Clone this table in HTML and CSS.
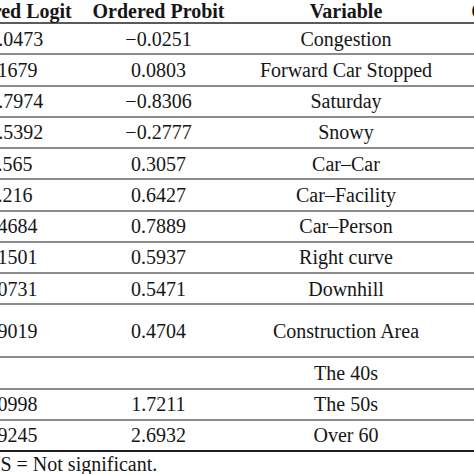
FILE: index.html
```html
<!DOCTYPE html>
<html>
<head>
<meta charset="utf-8">
<link rel="stylesheet" href="styles.css">
</head>
<body>
<div class="frame">
  <table class="results">
    <colgroup>
      <col class="c1"><col class="c2"><col class="c3"><col class="c4">
    </colgroup>
    <thead>
      <tr>
        <th>Ordered Logit</th>
        <th>Ordered Probit</th>
        <th>Variable</th>
        <th>Ordered Logit</th>
      </tr>
    </thead>
    <tbody>
      <tr><td>−0.0473</td><td>−0.0251</td><td>Congestion</td><td></td></tr>
      <tr><td>0.1679</td><td>0.0803</td><td>Forward Car Stopped</td><td></td></tr>
      <tr><td>−1.7974</td><td>−0.8306</td><td>Saturday</td><td></td></tr>
      <tr><td>−0.5392</td><td>−0.2777</td><td>Snowy</td><td></td></tr>
      <tr><td>0.565</td><td>0.3057</td><td>Car–Car</td><td></td></tr>
      <tr><td>1.216</td><td>0.6427</td><td>Car–Facility</td><td></td></tr>
      <tr><td>1.4684</td><td>0.7889</td><td>Car–Person</td><td></td></tr>
      <tr><td>1.1501</td><td>0.5937</td><td>Right curve</td><td></td></tr>
      <tr><td>1.0731</td><td>0.5471</td><td>Downhill</td><td></td></tr>
      <tr class="tall"><td>0.9019</td><td>0.4704</td><td>Construction Area</td><td></td></tr>
      <tr><td></td><td></td><td>The 40s</td><td></td></tr>
      <tr><td>3.0998</td><td>1.7211</td><td>The 50s</td><td></td></tr>
      <tr class="last"><td>4.9245</td><td>2.6932</td><td>Over 60</td><td></td></tr>
    </tbody>
  </table>
  <p class="note">NS = Not significant.</p>
</div>
</body>
</html>
```

FILE: styles.css
```css
html, body {
  margin: 0;
  padding: 0;
  background: #ffffff;
  overflow: hidden;
}

.frame {
  width: 474px;
  height: 474px;
  overflow: hidden;
  font-family: "Liberation Serif", "DejaVu Serif", serif;
  font-size: 20px;
  color: #161616;
}

.results {
  border-collapse: collapse;
  table-layout: fixed;
  width: 671px;
  margin-left: -65px;
}

.c1 { width: 150px; }
.c2 { width: 147px; }
.c3 { width: 228px; }
.c4 { width: 146px; }

.results th {
  font-weight: bold;
  height: 22px;
  padding: 0;
  text-align: center;
  vertical-align: middle;
  border-bottom: 2px solid #5a5a5a;
  line-height: 20px;
}

.results td {
  height: 29.25px;
  padding: 0;
  text-align: center;
  vertical-align: middle;
  white-space: nowrap;
  border-bottom: 2px solid #8c8c8c;
  line-height: 20px;
}

.results tr.tall td {
  height: 51px;
}

.results tr.last td {
  border-bottom: 2px solid #1e1e1e;
}

.note {
  margin: 2px 0 0 -14px;
  line-height: 20px;
  white-space: nowrap;
}
```
